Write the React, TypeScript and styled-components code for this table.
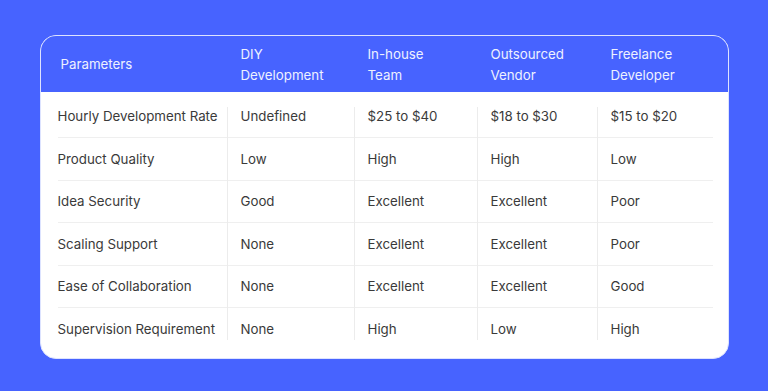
import React from 'react';
import styled, { createGlobalStyle } from 'styled-components';

const GlobalStyle = createGlobalStyle`
  html, body {
    margin: 0;
    padding: 0;
    background: #4763ff;
  }
  body {
    font-family: Inter, "Noto Sans", "Liberation Sans", sans-serif;
  }
`;

const COLUMNS = '169px 127px 123px 120px 115px';

const Page = styled.div`
  width: 768px;
  height: 391px;
  box-sizing: border-box;
  padding: 35px 0 0 40px;
  background: #4763ff;
`;

const Card = styled.div`
  width: 689px;
  height: 324px;
  box-sizing: border-box;
  border: 1.5px solid #dde3ff;
  border-radius: 16px;
  background: #ffffff;
  overflow: hidden;
  display: flex;
  flex-direction: column;
`;

const Header = styled.div`
  display: grid;
  grid-template-columns: ${COLUMNS};
  height: 55.5px;
  box-sizing: border-box;
  padding: 2px 15.5px 0 16.5px;
  background: #4763ff;
`;

const HeadCell = styled.div<{ $first?: boolean }>`
  display: flex;
  align-items: center;
  padding-left: ${(p) => (p.$first ? '3px' : '14px')};
  color: #eef1ff;
  font-size: 13.3px;
  line-height: 21px;
`;

const Body = styled.div`
  padding: 4px 15.5px 0 16.5px;
`;

const Row = styled.div<{ $last?: boolean }>`
  display: grid;
  grid-template-columns: ${COLUMNS};
  height: 42.5px;
  box-sizing: border-box;
  border-bottom: ${(p) => (p.$last ? 'none' : '1px solid #efefef')};
`;

const Cell = styled.div<{ $first?: boolean; $top?: boolean; $bottom?: boolean }>`
  position: relative;
  display: flex;
  align-items: center;
  padding-left: ${(p) => (p.$first ? '0' : '14px')};
  color: #3a3a3a;
  font-size: 13.3px;

  &::before {
    content: '';
    display: ${(p) => (p.$first ? 'none' : 'block')};
    position: absolute;
    left: 0;
    top: ${(p) => (p.$top ? '11px' : '0')};
    bottom: ${(p) => (p.$bottom ? '11px' : '-1px')};
    width: 1px;
    background: #ececec;
  }
`;

const headers: React.ReactNode[] = [
  'Parameters',
  <>DIY<br />Development</>,
  <>In-house<br />Team</>,
  <>Outsourced<br />Vendor</>,
  <>Freelance<br />Developer</>,
];

const rows: string[][] = [
  ['Hourly Development Rate', 'Undefined', '$25 to $40', '$18 to $30', '$15 to $20'],
  ['Product Quality', 'Low', 'High', 'High', 'Low'],
  ['Idea Security', 'Good', 'Excellent', 'Excellent', 'Poor'],
  ['Scaling Support', 'None', 'Excellent', 'Excellent', 'Poor'],
  ['Ease of Collaboration', 'None', 'Excellent', 'Excellent', 'Good'],
  ['Supervision Requirement', 'None', 'High', 'Low', 'High'],
];

const App: React.FC = () => (
  <Page>
    <GlobalStyle />
    <Card>
      <Header>
        {headers.map((h, i) => (
          <HeadCell key={i} $first={i === 0}>
            <span>{h}</span>
          </HeadCell>
        ))}
      </Header>
      <Body>
        {rows.map((r, ri) => (
          <Row key={ri} $last={ri === rows.length - 1}>
            {r.map((c, ci) => (
              <Cell
                key={ci}
                $first={ci === 0}
                $top={ri === 0}
                $bottom={ri === rows.length - 1}
              >
                {c}
              </Cell>
            ))}
          </Row>
        ))}
      </Body>
    </Card>
  </Page>
);

export default App;
